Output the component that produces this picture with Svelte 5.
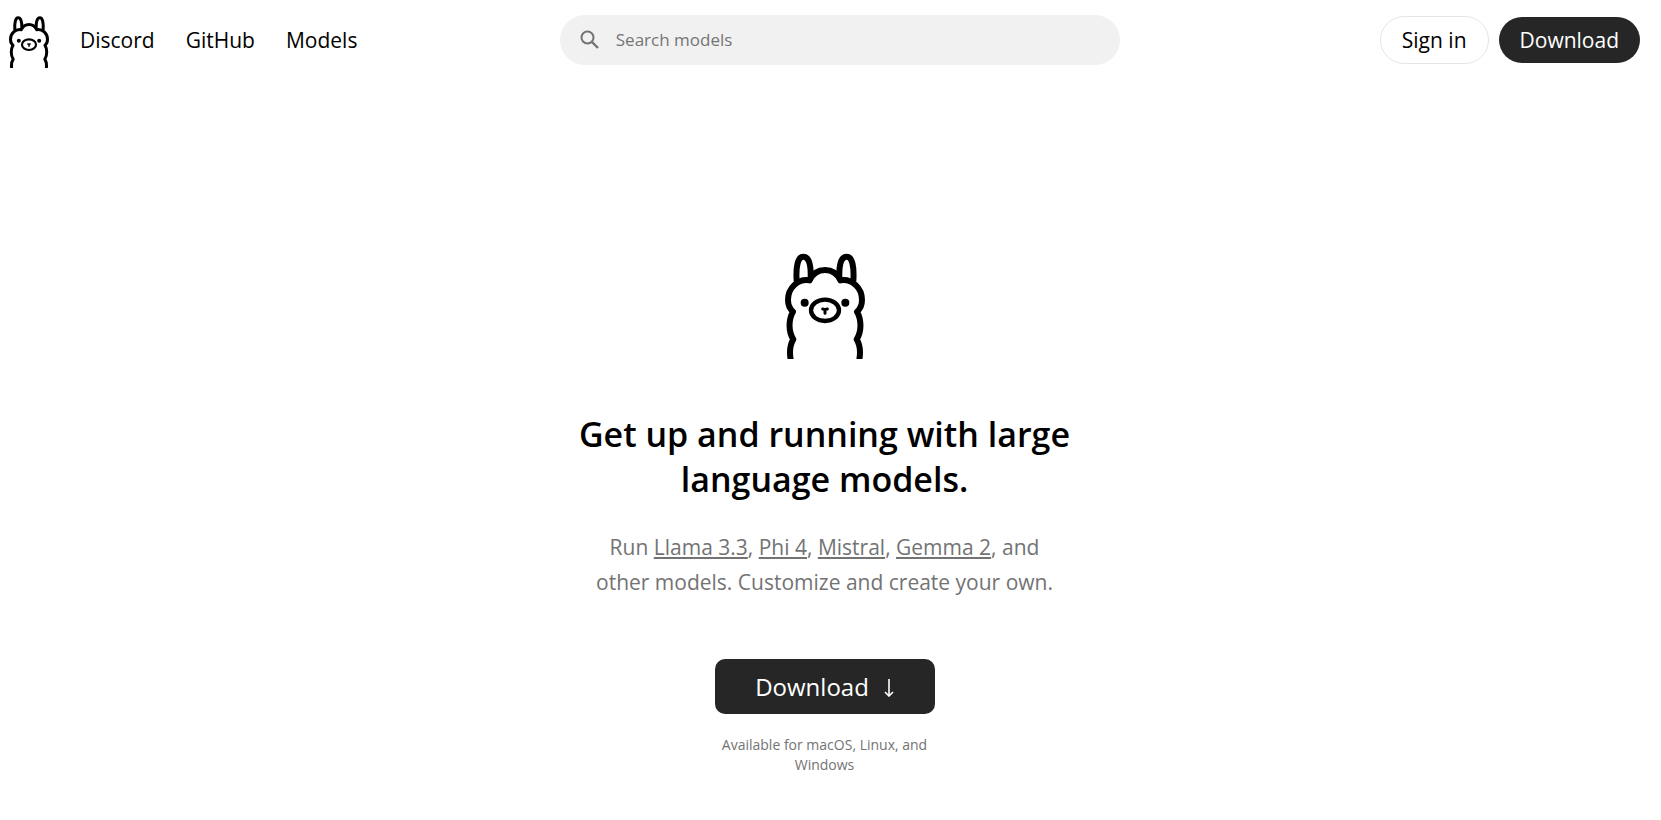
<script lang="ts">
  type NavLink = { label: string; href: string };
  type Model = { name: string; href: string };

  const navLinks: NavLink[] = [
    { label: 'Discord', href: '#discord' },
    { label: 'GitHub', href: '#github' },
    { label: 'Models', href: '#models' }
  ];

  const models: Model[] = [
    { name: 'Llama 3.3', href: '#llama3.3' },
    { name: 'Phi 4', href: '#phi4' },
    { name: 'Mistral', href: '#mistral' },
    { name: 'Gemma 2', href: '#gemma2' }
  ];

  let query = '';
</script>

<!-- Shared logo, used in the header and in the hero -->
{#snippet llama()}
  <svg class="llama" viewBox="45 40 240 317" fill="none" stroke="#000" stroke-width="18" stroke-linejoin="round" aria-hidden="true">
    <path d="M80 125 C77 78 84 51 100 51 C117 51 123 76 122 112" />
    <path d="M250 125 C253 78 246 51 230 51 C213 51 207 76 208 112" />
    <path d="M119 122 C128 102 145 91 165 91 C185 91 202 102 211 122" stroke-linecap="round" />
    <path d="M119 122 C84 116 54 145 54 181 C54 196 60 208 69 216 C55 240 55 276 70 299 C60 315 58 337 62 360" />
    <path d="M211 122 C246 116 276 145 276 181 C276 196 270 208 261 216 C275 240 275 276 260 299 C270 315 272 337 268 360" />
    <ellipse cx="165" cy="212" rx="42" ry="32" stroke-width="13" />
    <circle cx="104" cy="189" r="12" fill="#000" stroke="none" />
    <circle cx="226" cy="189" r="12" fill="#000" stroke="none" />
    <path d="M158 208 L165 210 L172 208 M165 211 V221" stroke-width="9" stroke-linecap="round" />
  </svg>
{/snippet}

<div class="page">
  <header class="header">
    <nav class="nav">
      <a class="logo" href="#home" aria-label="Home">{@render llama()}</a>
      {#each navLinks as link}
        <a href={link.href}>{link.label}</a>
      {/each}
    </nav>

    <label class="search">
      <svg class="search__icon" viewBox="0 0 20 20" fill="none" stroke="#737373" stroke-width="2" aria-hidden="true">
        <circle cx="7.5" cy="7.5" r="6" />
        <path d="M11.5 11.5 L18 18" stroke-width="2.4" />
      </svg>
      <input type="text" placeholder="Search models" aria-label="Search models" bind:value={query} />
    </label>

    <div class="actions">
      <a class="pill" href="#signin">Sign in</a>
      <a class="pill pill--dark" href="#download">Download</a>
    </div>
  </header>

  <main class="hero">
    <div class="hero__logo">{@render llama()}</div>
    <h1>Get up and running with large language models.</h1>
    <p class="hero__text">
      Run {#each models as model}<a href={model.href}>{model.name}</a>,{' '}{/each}and other models. Customize and create your own.
    </p>
    <div class="download">
      <a class="download__button" href="#download">
        Download
        <svg class="download__arrow" viewBox="0 0 10 18" fill="none" stroke="#fff" stroke-width="1.6" aria-hidden="true">
          <path d="M5 0 V16" />
          <path d="M1 13 L5 17 L9 13" />
        </svg>
      </a>
      <p class="download__note">Available for macOS, Linux, and Windows</p>
    </div>
  </main>
</div>

<style>
  :global(body) {
    margin: 0;
    background: #fff;
  }

  .page {
    padding: 0 21px 0 9px;
    font-family: 'Segoe UI', 'Open Sans', 'Noto Sans', sans-serif;
    color: #000;
  }

  a {
    color: inherit;
    text-decoration: none;
  }

  .llama {
    display: block;
    width: 100%;
  }

  /* Header */
  .header {
    display: grid;
    grid-template-columns: 18fr minmax(280px, 560px) 17fr;
    align-items: center;
    height: 80px;
    font-size: 21px;
    line-height: 30px;
  }

  .nav {
    display: flex;
    align-items: center;
    gap: 31px;
  }

  .logo {
    width: 40px;
    padding-top: 4px;
  }

  .search {
    display: flex;
    align-items: center;
    gap: 16px;
    height: 50px;
    padding: 0 20px;
    border-radius: 25px;
    background: #f1f1f1;
  }

  .search__icon {
    flex: none;
    width: 20px;
    height: 20px;
  }

  .search input {
    flex: 1;
    min-width: 0;
    padding: 0;
    border: 0;
    outline: 0;
    background: transparent;
    font: inherit;
    font-size: 17px;
    color: #000;
  }

  .search input::placeholder {
    color: #757575;
    opacity: 1;
  }

  .actions {
    display: flex;
    align-items: center;
    justify-content: flex-end;
    gap: 10px;
  }

  .pill {
    padding: 8px 21px;
    border: 1px solid #e5e5e5;
    border-radius: 24px;
    white-space: nowrap;
  }

  .pill--dark {
    border: 0;
    background: #262626;
    color: #fff;
  }

  /* Hero */
  .hero {
    display: flex;
    flex-direction: column;
    align-items: center;
    max-width: 520px;
    margin: 0 auto;
    padding: 173px 0 40px;
    text-align: center;
  }

  .hero__logo {
    width: 80px;
  }

  h1 {
    margin: 53px 0 0;
    font-size: 34px;
    font-weight: 600;
    line-height: 45px;
  }

  .hero__text {
    max-width: 470px;
    margin: 28px 0 0;
    font-size: 21px;
    line-height: 35px;
    color: #737373;
  }

  .hero__text a {
    text-decoration: underline;
    text-decoration-thickness: 2px;
    text-underline-offset: 2px;
  }

  .download {
    width: 220px;
    margin-top: 59px;
  }

  .download__button {
    display: flex;
    align-items: center;
    justify-content: center;
    gap: 15px;
    height: 55px;
    border-radius: 10px;
    background: #262626;
    font-size: 24px;
    color: #fff;
  }

  .download__arrow {
    width: 10px;
    height: 18px;
    padding-top: 4px;
  }

  .download__note {
    margin: 21px 0 0;
    font-size: 14px;
    line-height: 20px;
    color: #737373;
  }
</style>
